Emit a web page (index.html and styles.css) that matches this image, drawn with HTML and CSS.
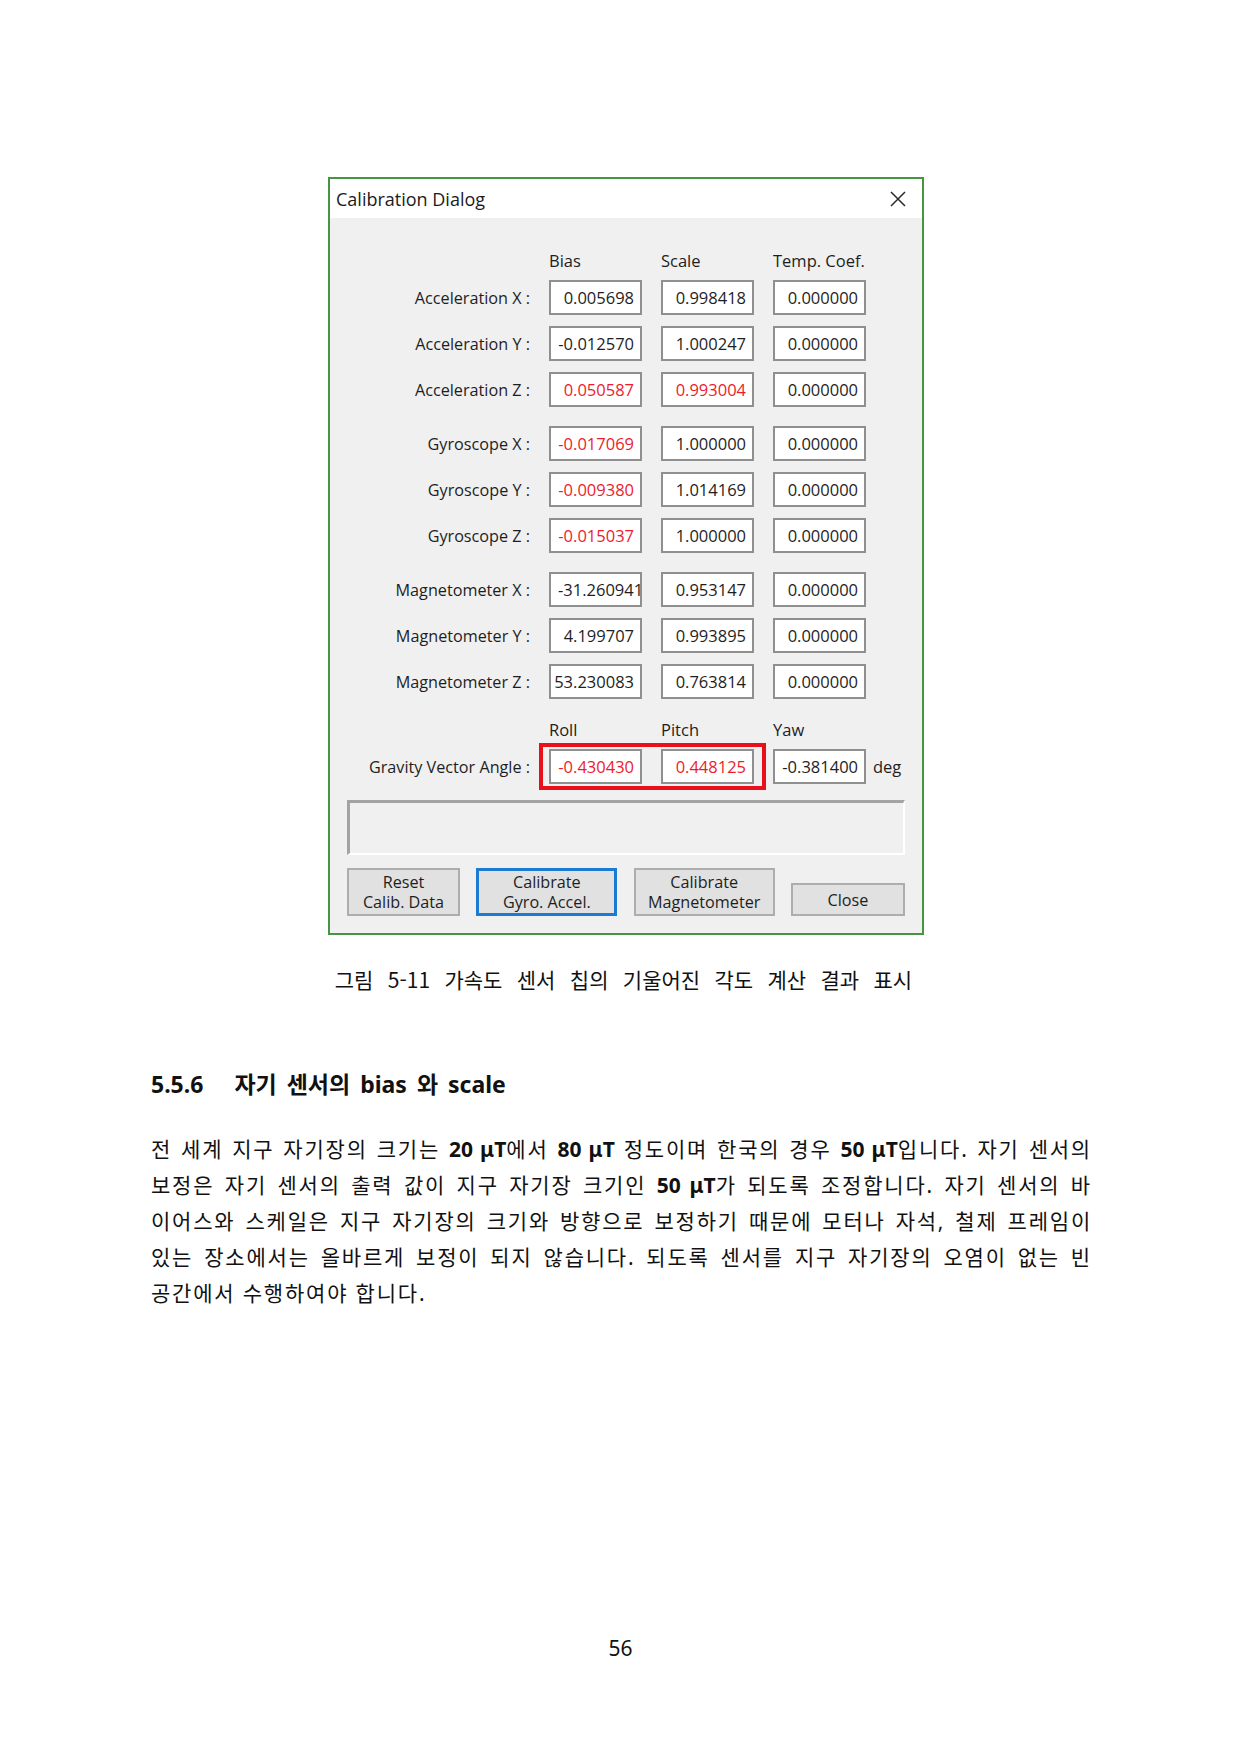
FILE: index.html
```html
<!DOCTYPE html>
<html lang="ko">
<head>
<meta charset="utf-8">
<title>Calibration Dialog</title>
<link rel="stylesheet" href="styles.css">
</head>
<body>
<div class="page">
  <div class="dialog">
    <div class="titlebar">
      <span class="title">Calibration Dialog</span>
      <svg class="close-x" width="18" height="18" viewBox="0 0 18 18"><path d="M2 2 L16 16 M16 2 L2 16" stroke="#2b2b2b" stroke-width="1.5" fill="none"/></svg>
    </div>
    <div class="dbody">
      <div class="row head">
        <span></span><span>Bias</span><span>Scale</span><span>Temp. Coef.</span>
      </div>
      <div class="group first">
        <div class="row"><span class="lbl">Acceleration X :</span><span class="box">0.005698</span><span class="box">0.998418</span><span class="box">0.000000</span></div>
        <div class="row"><span class="lbl">Acceleration Y :</span><span class="box">-0.012570</span><span class="box">1.000247</span><span class="box">0.000000</span></div>
        <div class="row"><span class="lbl">Acceleration Z :</span><span class="box red">0.050587</span><span class="box red">0.993004</span><span class="box">0.000000</span></div>
      </div>
      <div class="group">
        <div class="row"><span class="lbl">Gyroscope X :</span><span class="box red">-0.017069</span><span class="box">1.000000</span><span class="box">0.000000</span></div>
        <div class="row"><span class="lbl">Gyroscope Y :</span><span class="box red">-0.009380</span><span class="box">1.014169</span><span class="box">0.000000</span></div>
        <div class="row"><span class="lbl">Gyroscope Z :</span><span class="box red">-0.015037</span><span class="box">1.000000</span><span class="box">0.000000</span></div>
      </div>
      <div class="group">
        <div class="row"><span class="lbl">Magnetometer X :</span><span class="box clip">-31.260941</span><span class="box">0.953147</span><span class="box">0.000000</span></div>
        <div class="row"><span class="lbl">Magnetometer Y :</span><span class="box">4.199707</span><span class="box">0.993895</span><span class="box">0.000000</span></div>
        <div class="row"><span class="lbl">Magnetometer Z :</span><span class="box">53.230083</span><span class="box">0.763814</span><span class="box">0.000000</span></div>
      </div>
      <div class="row head head2">
        <span></span><span>Roll</span><span>Pitch</span><span>Yaw</span>
      </div>
      <div class="row gravity">
        <span class="lbl">Gravity Vector Angle :</span><span class="box red">-0.430430</span><span class="box red">0.448125</span>
        <span class="last"><span class="box">-0.381400</span><span class="unit">deg</span></span>
        <span class="highlight"></span>
      </div>
      <div class="status"></div>
      <div class="buttons">
        <button class="btn b-reset">Reset<br>Calib. Data</button>
        <button class="btn b-gyro">Calibrate<br>Gyro. Accel.</button>
        <button class="btn b-mag">Calibrate<br>Magnetometer</button>
        <button class="btn b-close">Close</button>
      </div>
    </div>
  </div>

  <p class="caption">그림 5-11 가속도 센서 칩의 기울어진 각도 계산 결과 표시</p>

  <h3 class="heading"><span class="num">5.5.6</span>자기 센서의 bias 와 scale</h3>

  <p class="para">
    <span class="ln">전 세계 지구 자기장의 크기는 <b class="u">20 μT</b>에서 <b class="u">80 μT</b> 정도이며 한국의 경우 <b class="u">50 μT</b>입니다. 자기 센서의</span>
    <span class="ln">보정은 자기 센서의 출력 값이 지구 자기장 크기인 <b class="u">50 μT</b>가 되도록 조정합니다. 자기 센서의 바</span>
    <span class="ln">이어스와 스케일은 지구 자기장의 크기와 방향으로 보정하기 때문에 모터나 자석, 철제 프레임이</span>
    <span class="ln">있는 장소에서는 올바르게 보정이 되지 않습니다. 되도록 센서를 지구 자기장의 오염이 없는 빈</span>
    <span class="ln end">공간에서 수행하여야 합니다.</span>
  </p>

  <div class="pagenum">56</div>
</div>
</body>
</html>
```

FILE: styles.css
```css
html, body {
  margin: 0;
  padding: 0;
  background: #ffffff;
}

.page {
  width: 1241px;
  height: 1755px;
  box-sizing: border-box;
  padding-top: 177px;
  overflow: hidden;
}

/* ---------- dialog ---------- */
.dialog {
  box-sizing: border-box;
  width: 596px;
  margin-left: 328px;
  border: 2px solid #46963f;
  background: #f0f0f0;
  font-family: "Open Sans", "Noto Sans", sans-serif;
  font-size: 16.5px;
  color: #1e1e1e;
}

.titlebar {
  height: 39px;
  background: #ffffff;
  display: flex;
  align-items: center;
  justify-content: space-between;
  padding: 0 15px 0 6px;
}

.title {
  font-size: 18px;
  color: #1b1b1b;
}

.close-x {
  display: block;
}

.dbody {
  padding: 33px 17px 17px 17px;
}

.row {
  display: grid;
  grid-template-columns: 183px 93px 93px auto;
  column-gap: 19px;
  align-items: center;
}

.head {
  height: 20px;
  line-height: 20px;
  margin-bottom: 9px;
}

.head2 {
  margin-top: 21px;
}

.group {
  display: flex;
  flex-direction: column;
  gap: 11px;
  margin-top: 19px;
}

.group.first {
  margin-top: 0;
}

.lbl {
  text-align: right;
  white-space: nowrap;
  font-size: 16.2px;
}

.box {
  box-sizing: border-box;
  display: block;
  width: 93px;
  height: 35px;
  line-height: 31px;
  border: 2px solid #8f8f8f;
  background: #ffffff;
  text-align: right;
  padding-right: 6px;
  white-space: nowrap;
  overflow: hidden;
  color: #1e1e1e;
}

.box.red {
  color: #ec1c2a;
}

.box.clip {
  text-align: left;
  padding-left: 7px;
  padding-right: 0;
}

.gravity {
  position: relative;
}

.last {
  display: flex;
  align-items: center;
  gap: 7px;
}

.unit {
  line-height: 20px;
}

.highlight {
  position: absolute;
  left: 192px;
  top: -6px;
  width: 227px;
  height: 47px;
  box-sizing: border-box;
  border: 4px solid #e8101a;
  pointer-events: none;
}

.status {
  margin-top: 16px;
  height: 55px;
  box-sizing: border-box;
  border-style: solid;
  border-width: 3px 2px 2px 3px;
  border-color: #a3a3a3 #ffffff #ffffff #a3a3a3;
  background: #f0f0f0;
}

.buttons {
  margin-top: 13px;
  height: 48px;
  display: flex;
  align-items: flex-end;
  justify-content: space-between;
}

.btn {
  box-sizing: border-box;
  margin: 0;
  padding: 0;
  background: #e1e1e1;
  border: 2px solid #adadad;
  font-family: "Open Sans", "Noto Sans", sans-serif;
  font-size: 16.2px;
  line-height: 20px;
  color: #1e1e1e;
  text-align: center;
}

.b-reset { width: 113px; height: 48px; }
.b-gyro { width: 141px; height: 48px; border: 3px solid #1b7bd2; }
.b-mag { width: 141px; height: 48px; }
.b-close { width: 114px; height: 33px; }

/* ---------- document text ---------- */
.caption {
  margin: 29px 0 0 6px;
  text-align: center;
  font-family: "Noto Sans CJK KR", sans-serif;
  font-size: 21px;
  line-height: 30px;
  word-spacing: 8.5px;
  color: #111111;
}

.heading {
  margin: 74px 0 0 151px;
  font-family: "Noto Sans", "Noto Sans CJK KR", sans-serif;
  font-size: 23px;
  line-height: 32px;
  font-weight: 700;
  word-spacing: 4px;
  color: #111111;
}

.heading .num {
  display: inline-block;
  margin-right: 31px;
}

.para {
  margin: 31px 0 0 151px;
  width: 941px;
  font-family: "Noto Sans", "Noto Sans CJK KR", sans-serif;
  font-size: 21px;
  line-height: 36px;
  letter-spacing: 1.8px;
  color: #111111;
}

.ln {
  display: block;
  text-align: justify;
  text-align-last: justify;
}

.ln.end {
  text-align-last: left;
}

.u {
  font-weight: 700;
  letter-spacing: 0;
}

.pagenum {
  margin-top: 322px;
  text-align: center;
  font-family: "Noto Sans", sans-serif;
  font-size: 21px;
  line-height: 30px;
  color: #111111;
}
```
